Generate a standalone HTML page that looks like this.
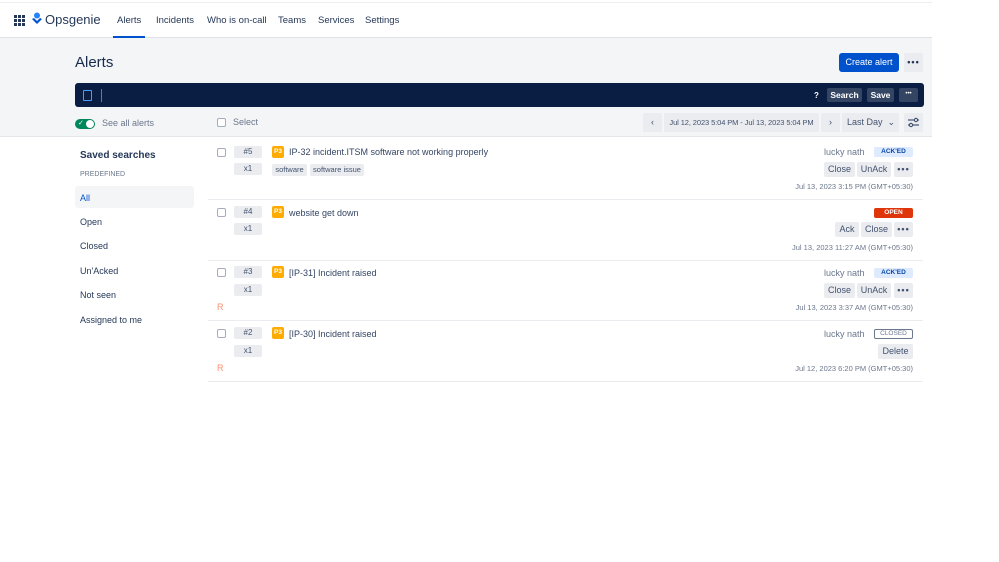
<!DOCTYPE html><html><head><style>
*{margin:0;padding:0;box-sizing:border-box}
body{width:999px;height:562px;background:#fff;font-family:"Liberation Sans",sans-serif;color:#172b4d;position:relative;overflow:hidden;font-size:9px}
.a{position:absolute;white-space:nowrap}
.nav{left:0;top:2px;width:932px;height:36px;border-top:1px solid #eee;border-bottom:1px solid #dfe1e6;background:#fff}
.nav span{position:absolute;top:12px;font-size:9.5px;color:#253858}
.gray{left:0;top:38px;width:932px;height:99px;background:#f4f5f7;border-bottom:1px solid #e4e6ea}
.btn{position:absolute;background:#ebecf0;color:#42526e;font-size:9px;border-radius:2px;text-align:center;line-height:15px;height:15px;white-space:nowrap}
.dots{letter-spacing:1px;font-weight:bold}
.sep{position:absolute;left:208px;width:715px;height:1px;background:#ebecf0}
.cb{position:absolute;width:9px;height:9px;border:1px solid #a5adba;border-radius:2px;background:#fff}
.num{position:absolute;width:28px;height:12px;background:#ebecf0;color:#42526e;font-size:8px;text-align:center;line-height:12px;border-radius:2px;white-space:nowrap}
.p3{position:absolute;width:12px;height:12px;background:#ffab00;color:#fff;font-size:6.5px;font-weight:bold;text-align:center;line-height:12px;border-radius:2px}
.t{position:absolute;font-size:9px;color:#344563;white-space:nowrap}
.ts{position:absolute;right:86px;font-size:7.5px;color:#6b778c;white-space:nowrap}
.side{position:absolute;left:80px;font-size:9px;color:#253858}
</style></head><body>
<div class="a nav">
<svg class="a" style="left:14px;top:12px" width="11" height="11"><g fill="#253858"><rect x="0" y="0" width="3" height="3"/><rect x="4" y="0" width="3" height="3"/><rect x="8" y="0" width="3" height="3"/><rect x="0" y="4" width="3" height="3"/><rect x="4" y="4" width="3" height="3"/><rect x="8" y="4" width="3" height="3"/><rect x="0" y="8" width="3" height="3"/><rect x="4" y="8" width="3" height="3"/><rect x="8" y="8" width="3" height="3"/></g></svg>
<svg class="a" style="left:32px;top:9px" width="10" height="14"><circle cx="5" cy="3.5" r="3" fill="#2684ff"/><path d="M0 7 L5 12 L10 7 L8 6 L5 9 L2 6Z" fill="#0052cc"/></svg>
<span style="left:45px;top:9px;font-size:13px;color:#253858">Opsgenie</span>
<span style="left:117px">Alerts</span>
<div class="a" style="left:113px;top:33px;width:32px;height:2px;background:#0052cc"></div>
<span style="left:156px">Incidents</span>
<span style="left:207px">Who is on-call</span>
<span style="left:278px">Teams</span>
<span style="left:318px">Services</span>
<span style="left:365px">Settings</span>
</div>
<div class="a gray"></div>
<div class="a" style="left:75px;top:54px;font-size:15px;color:#172b4d">Alerts</div>
<div class="a" style="left:839px;top:53px;width:60px;height:19px;background:#0052cc;color:#fff;border-radius:3px;font-size:9px;text-align:center;line-height:19px">Create alert</div>
<div class="btn dots" style="left:904px;top:53px;width:19px;height:19px;line-height:18px;color:#253858">•••</div>
<div class="a" style="left:75px;top:83px;width:849px;height:24px;background:#091e42;border-radius:3px"></div>
<div class="a" style="left:83px;top:90px;width:9px;height:11px;border:1.5px solid #4c9aff;border-radius:1px"></div>
<div class="a" style="left:101px;top:89px;width:1px;height:13px;background:#6b778c"></div>
<div class="a" style="left:814px;top:91px;color:#fff;font-size:8px;font-weight:bold">?</div>
<div class="btn" style="left:827px;top:88px;width:35px;height:14px;line-height:14px;background:#344563;color:#fff;font-size:8.5px;font-weight:bold">Search</div>
<div class="btn" style="left:867px;top:88px;width:27px;height:14px;line-height:14px;background:#344563;color:#fff;font-size:8.5px;font-weight:bold">Save</div>
<div class="btn" style="left:899px;top:88px;width:19px;height:14px;line-height:12px;background:#344563;color:#fff;font-size:6px;letter-spacing:0">•••</div>
<div class="a" style="left:75px;top:119px;width:20px;height:10px;background:#00875a;border-radius:5px"><div class="a" style="left:11px;top:1px;width:8px;height:8px;background:#fff;border-radius:50%"></div><div class="a" style="left:3px;top:0;color:#fff;font-size:7px">✓</div></div>
<div class="a" style="left:102px;top:118px;color:#6b778c">See all alerts</div>
<div class="cb" style="left:217px;top:118px"></div>
<div class="a" style="left:233px;top:117px;color:#6b778c">Select</div>
<div class="btn" style="left:643px;top:113px;width:19px;height:19px;line-height:19px">‹</div>
<div class="btn" style="left:664px;top:113px;width:155px;height:19px;line-height:19px;font-size:7.5px;color:#42526e;letter-spacing:-0.1px">Jul 12, 2023 5:04 PM - Jul 13, 2023 5:04 PM</div>
<div class="btn" style="left:821px;top:113px;width:19px;height:19px;line-height:19px">›</div>
<div class="btn" style="left:842px;top:113px;width:57px;height:19px;line-height:19px;text-align:left;padding-left:5px">Last Day &nbsp;⌄</div>
<div class="btn" style="left:904px;top:113px;width:19px;height:19px"><svg width="19" height="19"><g stroke="#42526e" stroke-width="1.2" fill="#fff"><line x1="4" y1="7" x2="15" y2="7"/><line x1="4" y1="12" x2="15" y2="12"/><circle cx="12" cy="7" r="1.6"/><circle cx="7" cy="12" r="1.6"/></g></svg></div>

<div class="side" style="top:150px;font-size:10px;font-weight:bold;color:#253858">Saved searches</div>
<div class="side" style="top:171px;font-size:7px;color:#6b778c">PREDEFINED</div>
<div class="a" style="left:75px;top:186px;width:119px;height:22px;background:#f4f5f7;border-radius:3px"></div>
<div class="side" style="top:193px;color:#0052cc">All</div>
<div class="side" style="top:217px">Open</div>
<div class="side" style="top:241px">Closed</div>
<div class="side" style="top:266px">Un'Acked</div>
<div class="side" style="top:290px">Not seen</div>
<div class="side" style="top:315px">Assigned to me</div>

<!-- row1 -->
<div class="cb" style="left:217px;top:148px"></div>
<div class="num" style="left:234px;top:146px">#5</div><div class="num" style="left:234px;top:163px">x1</div>
<div class="p3" style="left:272px;top:146px">P3</div>
<div class="t" style="left:289px;top:147px">IP-32 incident.ITSM software not working properly</div>
<div class="num" style="left:272px;top:164px;width:35px;font-size:7.5px">software</div>
<div class="num" style="left:310px;top:164px;width:54px;font-size:7.5px">software issue</div>
<div class="a" style="left:824px;top:147px;color:#6b778c">lucky nath</div>
<div class="a" style="left:874px;top:147px;width:39px;height:10px;background:#deebff;color:#0747a6;font-size:6.5px;font-weight:bold;text-align:center;line-height:10px;border-radius:2px">ACK'ED</div>
<div class="btn" style="left:824px;top:162px;width:31px">Close</div><div class="btn" style="left:857px;top:162px;width:34px">UnAck</div><div class="btn dots" style="left:894px;top:162px;width:19px;color:#42526e">•••</div>
<div class="ts" style="top:182px">Jul 13, 2023 3:15 PM (GMT+05:30)</div>
<div class="sep" style="top:199px"></div>
<!-- row2 -->
<div class="cb" style="left:217px;top:208px"></div>
<div class="num" style="left:234px;top:206px">#4</div><div class="num" style="left:234px;top:223px">x1</div>
<div class="p3" style="left:272px;top:206px">P3</div>
<div class="t" style="left:289px;top:208px">website get down</div>
<div class="a" style="left:874px;top:208px;width:39px;height:10px;background:#de350b;color:#fff;font-size:6.5px;font-weight:bold;text-align:center;line-height:10px;border-radius:2px">OPEN</div>
<div class="btn" style="left:835px;top:222px;width:24px">Ack</div><div class="btn" style="left:861px;top:222px;width:31px">Close</div><div class="btn dots" style="left:894px;top:222px;width:19px;color:#42526e">•••</div>
<div class="ts" style="top:243px">Jul 13, 2023 11:27 AM (GMT+05:30)</div>
<div class="sep" style="top:260px"></div>
<!-- row3 -->
<div class="cb" style="left:217px;top:268px"></div>
<div class="num" style="left:234px;top:266px">#3</div><div class="num" style="left:234px;top:284px">x1</div>
<div class="p3" style="left:272px;top:266px">P3</div>
<div class="t" style="left:289px;top:268px">[IP-31] Incident raised</div>
<div class="a" style="left:217px;top:302px;color:#ff8f73;font-size:9px">R</div>
<div class="a" style="left:824px;top:268px;color:#6b778c">lucky nath</div>
<div class="a" style="left:874px;top:268px;width:39px;height:10px;background:#deebff;color:#0747a6;font-size:6.5px;font-weight:bold;text-align:center;line-height:10px;border-radius:2px">ACK'ED</div>
<div class="btn" style="left:824px;top:283px;width:31px">Close</div><div class="btn" style="left:857px;top:283px;width:34px">UnAck</div><div class="btn dots" style="left:894px;top:283px;width:19px;color:#42526e">•••</div>
<div class="ts" style="top:303px">Jul 13, 2023 3:37 AM (GMT+05:30)</div>
<div class="sep" style="top:320px"></div>
<!-- row4 -->
<div class="cb" style="left:217px;top:329px"></div>
<div class="num" style="left:234px;top:327px">#2</div><div class="num" style="left:234px;top:345px">x1</div>
<div class="p3" style="left:272px;top:327px">P3</div>
<div class="t" style="left:289px;top:329px">[IP-30] Incident raised</div>
<div class="a" style="left:217px;top:363px;color:#ff8f73;font-size:9px">R</div>
<div class="a" style="left:824px;top:329px;color:#6b778c">lucky nath</div>
<div class="a" style="left:874px;top:329px;width:39px;height:10px;border:1px solid #6b778c;color:#6b778c;font-size:6.5px;text-align:center;line-height:8px;border-radius:2px">CLOSED</div>
<div class="btn" style="left:878px;top:344px;width:35px">Delete</div>
<div class="ts" style="top:364px">Jul 12, 2023 6:20 PM (GMT+05:30)</div>
<div class="sep" style="top:381px"></div>
</body></html>
